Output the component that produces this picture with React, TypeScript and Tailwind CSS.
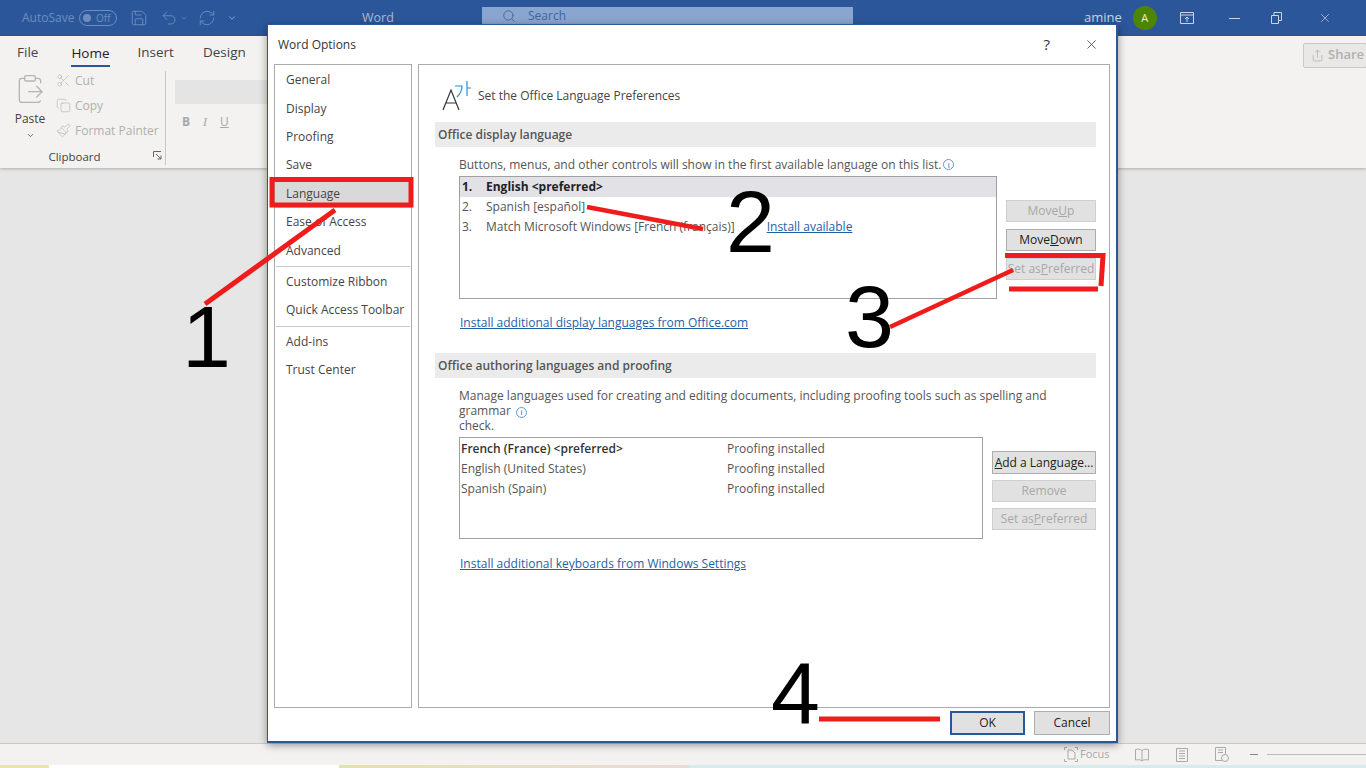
import React from "react";
import {ChevronDown, ClipboardPaste, Copy, Paintbrush, Redo2, RefreshCw, Save, Scissors, Search, Share, Undo2, X} from "lucide-react";

const font = "font-['Open_Sans','Noto_Sans',sans-serif]";

function TitleBar() {
    return (
        <div className="h-[36px] bg-[#2b579a] flex items-center shrink-0 text-[#6e8dbd]">
            <span className="ml-[22px] text-[12px] w-[54px]">AutoSave</span>
            <div className="ml-[3px] w-[38px] h-[16px] rounded-full border border-[#6e8dbd] flex items-center px-[3px] gap-[5px]">
                <div className="w-[8px] h-[8px] rounded-full bg-[#6e8dbd]"/>
                <span className="text-[10px]">Off</span>
            </div>
            <Save className="ml-[13px] w-[18px] h-[18px]" strokeWidth={1.2}/>
            <Undo2 className="ml-[12px] w-[18px] h-[18px]" strokeWidth={1.2}/>
            <ChevronDown className="ml-[2px] w-[8px] h-[8px]"/>
            <RefreshCw className="ml-[10px] w-[18px] h-[18px]" strokeWidth={1.2}/>
            <ChevronDown className="ml-[11px] w-[10px] h-[10px] text-[#a9bcd9]"/>
            <span className="ml-[125px] text-[12.5px] text-[#a9bcd9] w-[120px]">Word</span>
            <div className="w-[371px] h-[18px] mt-[-4px] bg-[#8aa5cf] flex items-center pl-[20px] gap-[12px] text-[#3f659f]">
                <Search className="w-[14px] h-[14px]" strokeWidth={1.5}/>
                <span className="text-[12px]">Search</span>
            </div>
            <span className="ml-[231px] text-[13px] text-[#c8d4e6]">amine</span>
            <div className="ml-[11px] w-[24px] h-[24px] rounded-full bg-[#4e8500] text-[#e8f0c8] text-[11px] flex items-center justify-center">A</div>
            <svg className="ml-[23px] w-[14px] h-[12px]" viewBox="0 0 14 12" fill="none" stroke="#c8d4e6">
                <path d="M.5.5h13v11H.5zM.5 3h13M7 10V5M5 7l2-2 2 2"/>
            </svg>
            <div className="ml-[35px] w-[11px] h-px bg-[#c8d4e6]"/>
            <svg className="ml-[31px] w-[11px] h-[12px]" viewBox="0 0 11 12" fill="none" stroke="#c8d4e6">
                <path d="M.5 3.5h7v8h-7zM3 3.5V.5h7.5v8H8"/>
            </svg>
            <X className="ml-[36px] w-[14px] h-[14px] text-[#c8d4e6]" strokeWidth={1.2}/>
        </div>
    )
}

function Ribbon() {
    return (
        <div className="h-[132px] bg-[#f3f2f1] shrink-0 shadow-[0_1px_3px_rgba(0,0,0,0.25)] relative">
            <div className="h-[32px] flex items-center text-[13.5px] text-[#444] relative">
                <span className="ml-[17px]">File</span>
                <span className="ml-[33px] text-[#222] border-b-[2px] border-[#2b579a] h-[24px] mt-[5px]">Home</span>
                <span className="ml-[28px]">Insert</span>
                <span className="ml-[29px]">Design</span>
                <div className="ml-auto mr-[-1px] mt-[6px] w-[64px] h-[25px] border border-[#c9c9c9] bg-[#e9e8e7] rounded-[2px] text-[#b0b0b0] flex items-center text-[13px] font-semibold pl-[7px] gap-[4px]">
                    <Share className="w-[13px] h-[13px]" strokeWidth={1.4}/>
                    Share
                </div>
            </div>
            <div className="flex h-[100px]">
                <div className="w-[166px] h-[94px] mt-[3px] border-r border-[#c8c8c8] flex flex-col">
                    <div className="flex h-[75px]">
                        <div className="ml-[14px] w-[32px] flex flex-col items-center">
                            <ClipboardPaste className="w-[32px] h-[32px] mt-[2px] text-[#b5b5b5]" strokeWidth={1}/>
                            <span className="text-[12px] text-[#444] mt-[5px]">Paste</span>
                            <ChevronDown className="w-[9px] h-[9px] text-[#444] mt-[3px]"/>
                        </div>
                        <div className="ml-[10px] flex flex-col text-[12px] text-[#b0b0b0] gap-[6px]">
                            <div className="flex items-center gap-[4px] h-[19px]"><Scissors className="w-[15px] h-[15px]" strokeWidth={1}/>Cut</div>
                            <div className="flex items-center gap-[4px] h-[19px]"><Copy className="w-[15px] h-[15px]" strokeWidth={1}/>Copy</div>
                            <div className="flex items-center gap-[4px] h-[19px]"><Paintbrush className="w-[15px] h-[15px]" strokeWidth={1}/>Format Painter</div>
                        </div>
                    </div>
                    <div className="relative text-center text-[11.5px] text-[#444] mt-[4px] pr-[16px]">
                        Clipboard
                        <svg className="absolute right-[3px] top-[3px] w-[9px] h-[9px]" viewBox="0 0 9 9" fill="none" stroke="#666">
                            <path d="M.5 6V.5H8M3 3l5 5M4.5 8H8V4.5"/>
                        </svg>
                    </div>
                </div>
                <div className="ml-[9px] mt-[12px] flex flex-col">
                    <div className="w-[100px] h-[24px] bg-[#e4e4e4]"/>
                    <div className="flex items-center gap-[13px] mt-[9px] text-[12px] text-[#a8a8a8] pl-[7px]">
                        <span className="font-bold">B</span>
                        <span className="italic font-['Liberation_Serif',serif]">I</span>
                        <span className="underline">U</span>
                    </div>
                </div>
            </div>
        </div>
    )
}

function StatusBar() {
    return (
        <div className="h-[22px] bg-[#f3f2f1] border-t border-[#c9c9c9] shrink-0 flex items-center text-[#a8a8a8]">
            <svg className="ml-[1064px] w-[14px] h-[15px]" viewBox="0 0 14 15" fill="none" stroke="#aaa">
                <path d="M4 3h4l3 3v6H4zM.5 3V.5H3M11 .5h2.5V3M.5 12v2.5H3M11 14.5h2.5V12"/>
            </svg>
            <span className="ml-[2px] text-[11px] w-[55px]">Focus</span>
            <svg className="w-[14px] h-[14px]" viewBox="0 0 14 14" fill="none" stroke="#aaa">
                <path d="M7 2.5C5.500 1 3 1 .5 1.500v10.500c2.500-.5 5-.5 6.500 1 1.500-1.500 4-1.500 6.500-1V1.500C11 1 8.500 1 7 2.500zM7 2.500V13"/>
            </svg>
            <svg className="ml-[27px] w-[12px] h-[14px]" viewBox="0 0 12 14" fill="none" stroke="#aaa">
                <path d="M.5.5h11v13H.5zM3 3h6M3 5.500h6M3 8h6M3 10.500h6"/>
            </svg>
            <svg className="ml-[27px] w-[14px] h-[15px]" viewBox="0 0 14 15" fill="none" stroke="#aaa">
                <path d="M7 13.500H.5V.5h10V7M3 3h5M3 5.500h5"/>
                <circle cx="10" cy="11" r="3.500"/>
            </svg>
            <div className="ml-[21px] w-[8px] h-px bg-[#888]"/>
            <div className="ml-[9px] flex-1 h-px bg-[#bbb]"/>
        </div>
    )
}

function OptionsNav() {
    const Item = ({label, active}: {label: string, active?: boolean}) => (
        <div className={`h-[28.400px] flex items-center pl-[11px] ${active ? "bg-[#d9d9d9]" : ""}`}>{label}</div>
    )
    const Sep = () => <div className="h-px bg-[#c8c8c8] mx-[1px] my-[1px]"/>

    return (
        <div className="w-[139px] border border-[#ababab] pt-[1px] text-[12px] text-[#444]">
            <Item label="General"/>
            <Item label="Display"/>
            <Item label="Proofing"/>
            <Item label="Save"/>
            <Item label="Language" active/>
            <Item label="Ease of Access"/>
            <Item label="Advanced"/>
            <Sep/>
            <Item label="Customize Ribbon"/>
            <Item label="Quick Access Toolbar"/>
            <Sep/>
            <Item label="Add-ins"/>
            <Item label="Trust Center"/>
        </div>
    )
}

function DlgButton({children, className, disabled}: {children: React.ReactNode, className: string, disabled?: boolean}) {
    return (
        <div className={`flex items-center justify-center border text-[12px] bg-[#e1e1e1] ${disabled ? "border-[#cfcfcf] text-[#a8a8a8]" : "border-[#adadad] text-[#222]"} ${className}`}>
            {children}
        </div>
    )
}

function SectionBand({title}: {title: string}) {
    return <div className="h-[25px] bg-[#ebebeb] flex items-center pl-[3px] text-[12px] font-semibold text-[#555]">{title}</div>
}

function InfoDot() {
    return (
        <span className="inline-flex items-center justify-center w-[11px] h-[11px] rounded-full border border-[#5b9bd5] text-[8px] leading-none text-[#2b579a] ml-[2px] align-[0px]">i</span>
    )
}

function LanguagePanel() {
    return (
        <div className="flex-1 border border-[#ababab] pl-[16px] pr-[13px] text-[12px] text-[#555]">
            <div className="h-[57px] flex items-center pl-[7px] pt-[4px]">
                <svg className="w-[30px] h-[32px]" viewBox="0 0 30 32" fill="none">
                    <path d="M1 30 9 10l8 20M4 23h10" stroke="#333" strokeWidth="1.200"/>
                    <path d="M13 6h7c0 4-2 8-5 11M25 1v15M25 8h4" stroke="#2e8fd8" strokeWidth="1.200"/>
                </svg>
                <span className="ml-[6px] text-[#444]">Set the Office Language Preferences</span>
            </div>
            <SectionBand title="Office display language"/>
            <div className="ml-[24px]">
                <div className="mt-[9px] h-[17px] flex items-center whitespace-pre">Buttons, menus, and other controls will show in the first available language on this list.<InfoDot/></div>
                <div className="flex mt-[3px]">
                    <div className="w-[538px] h-[123px] border border-[#a0a0a0]">
                        <div className="h-[20px] bg-[#e1e1e6] flex items-center font-bold text-[#222] pl-[2px]">
                            <span className="w-[24px]">1.</span>English &lt;preferred&gt;
                        </div>
                        <div className="h-[20px] flex items-center pl-[2px]">
                            <span className="w-[24px]">2.</span>Spanish [español]
                        </div>
                        <div className="h-[20px] flex items-center pl-[2px]">
                            <span className="w-[24px]">3.</span>Match Microsoft Windows [French (français)]
                            <span className="ml-[32px] text-[#1f5fa8] underline">Install available</span>
                        </div>
                    </div>
                    <div className="ml-[9px] mt-[24px] flex flex-col gap-[7px]">
                        <DlgButton className="w-[90px] h-[22px]" disabled>Move <u>U</u>p</DlgButton>
                        <DlgButton className="w-[90px] h-[22px]">Move <u>D</u>own</DlgButton>
                        <DlgButton className="w-[90px] h-[22px]" disabled>Set as <u>P</u>referred</DlgButton>
                    </div>
                </div>
                <div className="mt-[15px] text-[#1f5fa8] underline h-[17px] leading-[17px] ml-[1px]">Install additional display languages from Office.com</div>
            </div>
            <div className="mt-[22px]"><SectionBand title="Office authoring languages and proofing"/></div>
            <div className="ml-[24px]">
                <div className="mt-[10px] leading-[15px]">
                    Manage languages used for creating and editing documents, including proofing tools such as spelling and grammar <InfoDot/><br/>check.
                </div>
                <div className="flex mt-[4px]">
                    <div className="w-[524px] h-[102px] border border-[#a0a0a0] pl-[1px] pt-[1px]">
                        {[["French (France) <preferred>", true], ["English (United States)", false], ["Spanish (Spain)", false]].map(([name, bold]) => (
                            <div key={name as string} className="h-[20px] flex items-center">
                                <span className={`w-[266px] ${bold ? "font-semibold text-[#333]" : ""}`}>{name}</span>
                                <span>Proofing installed</span>
                            </div>
                        ))}
                    </div>
                    <div className="ml-[9px] mt-[14px] flex flex-col gap-[6px]">
                        <DlgButton className="w-[104px] h-[23px]"><u>A</u>dd a Language...</DlgButton>
                        <DlgButton className="w-[104px] h-[22px]" disabled>Remove</DlgButton>
                        <DlgButton className="w-[104px] h-[22px]" disabled>Set as <u>P</u>referred</DlgButton>
                    </div>
                </div>
                <div className="mt-[16px] text-[#1f5fa8] underline h-[17px] leading-[17px] ml-[1px]">Install additional keyboards from Windows Settings</div>
            </div>
        </div>
    )
}

function OptionsDialog() {
    return (
        <div className="absolute left-[267px] top-[24px] w-[851px] h-[719px] bg-white border border-[#2b579a] border-r-[2px] border-b-[2px] shadow-[0_2px_8px_rgba(0,0,0,0.4)] flex flex-col">
            <div className="h-[39px] flex items-center pl-[10px] text-[12px] text-[#333] shrink-0">
                Word Options
                <span className="ml-auto text-[15px]">?</span>
                <X className="ml-[34px] mr-[17px] w-[15px] h-[15px]" strokeWidth={1.2}/>
            </div>
            <div className="flex gap-[6px] px-[6px] h-[644px] shrink-0">
                <OptionsNav/>
                <LanguagePanel/>
            </div>
            <div className="flex justify-end gap-[9px] pr-[6px] pt-[3px]">
                <DlgButton className="w-[75px] h-[24px] !border-[2px] !border-[#2b579a]">OK</DlgButton>
                <DlgButton className="w-[76px] h-[24px]">Cancel</DlgButton>
            </div>
        </div>
    )
}

function Annotations() {
    return (
        <>
            <svg className="absolute left-0 top-0 w-[1366px] h-[768px] pointer-events-none" viewBox="0 0 1366 768" fill="none" stroke="#f01c1c" strokeWidth="5">
                <path d="M272 179.500H411V205H272z"/>
                <path d="M205 304 335 210"/>
                <path d="M587 207 703 229" strokeWidth="4.500"/>
                <path d="M1005 255.500H1103L1101 286M1009 289H1098" strokeWidth="5"/>
                <path d="M890 327 1013 270" strokeWidth="4.500"/>
                <path d="M819 719H940"/>
            </svg>
            <span className="absolute left-[182px] top-[287px] text-[88px] leading-[100px] text-black font-['Liberation_Sans',sans-serif]">1</span>
            <span className="absolute left-[726px] top-[172px] text-[88px] leading-[100px] text-black font-['Liberation_Sans',sans-serif]">2</span>
            <span className="absolute left-[845px] top-[267px] text-[88px] leading-[100px] text-black font-['Liberation_Sans',sans-serif]">3</span>
            <span className="absolute left-[771px] top-[644px] text-[88px] leading-[100px] text-black font-['Liberation_Sans',sans-serif]">4</span>
        </>
    )
}

export default function App() {
    return (
        <div className={`relative w-[1366px] h-[768px] overflow-hidden flex flex-col bg-[#e6e6e6] ${font}`}>
            <TitleBar/>
            <Ribbon/>
            <div className="flex-1 bg-[#e6e6e6]"/>
            <StatusBar/>
            <div className="h-[3px] shrink-0 flex">
                <div className="w-[49px] bg-[#e8e8a0]"/>
                <div className="w-[290px] bg-white"/>
                <div className="w-[350px] bg-gradient-to-r from-[#e2e2b0] to-[#e8dcd8]"/>
                <div className="flex-1 bg-[#d5ecec]"/>
            </div>
            <OptionsDialog/>
            <Annotations/>
        </div>
    )
}
